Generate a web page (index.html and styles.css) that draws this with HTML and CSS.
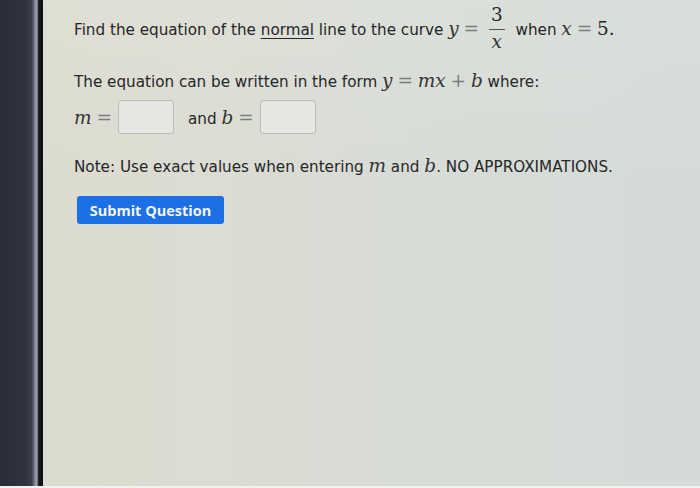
FILE: index.html
```html
<!DOCTYPE html>
<html>
<head>
<meta charset="utf-8">
<link rel="stylesheet" href="styles.css">
</head>
<body>
<div class="frame">
  <div class="bezel"></div>
  <main class="screen">
    <p class="q1">Find the equation of the <span class="ul">normal</span> line to the curve <span class="m">y</span> <span class="op">=</span> <span class="frac"><span class="num">3</span><span class="den m">x</span></span> when <span class="m">x</span> <span class="op">=</span> <span class="mn">5.</span></p>
    <p class="q2">The equation can be written in the form <span class="m">y</span> <span class="op">=</span> <span class="m">mx</span> <span class="op">+</span> <span class="m">b</span> where:</p>
    <div class="answers">
      <span class="m">m</span> <span class="op">=</span>
      <span class="box box-m"></span>
      <span class="lbl">and <span class="m">b</span> <span class="op">=</span></span>
      <span class="box box-b"></span>
    </div>
    <p class="note">Note: Use exact values when entering <span class="m">m</span> and <span class="m">b</span>. NO APPROXIMATIONS.</p>
    <button class="submit">Submit Question</button>
  </main>
</div>
</body>
</html>
```
FILE: styles.css
```css
html, body {
  margin: 0;
  padding: 0;
  width: 700px;
  height: 488px;
  overflow: hidden;
  background: #f2f2ef;
}
.frame {
  display: flex;
  height: 486px;
}
.bezel {
  width: 43px;
  flex: none;
  background: linear-gradient(90deg, #2a2c38 0%, #30333f 60%, #3a3e4c 74%, #8a90a2 82%, #9aa0b0 86%, #15161b 90%, #0e0f12 100%);
}
.screen {
  flex: 1;
  padding: 0 0 0 31px;
  background:
    linear-gradient(180deg, rgba(255,255,255,0.10) 0%, rgba(255,255,255,0) 40%),
    linear-gradient(90deg, #dcdbcf 0%, #dcdcd2 20%, #d8dcd6 55%, #d4dbd8 100%);
  font-family: "DejaVu Sans", "Open Sans", sans-serif;
  font-size: 15.2px;
  color: #262628;
}
p { margin: 0; }
.m {
  font-family: "DejaVu Serif", "Liberation Serif", serif;
  font-style: italic;
  font-size: 18.5px;
  color: #333;
}
.mn, .op {
  font-family: "DejaVu Serif", "Liberation Serif", serif;
  font-size: 18.5px;
}
.op { color: #7a7d7e; }
.ul {
  text-decoration: underline;
  text-underline-offset: 3px;
}
.q1 {
  height: 52px;
  line-height: 52px;
  padding-top: 3px;
}
.frac {
  display: inline-block;
  vertical-align: middle;
  text-align: center;
  line-height: 20px;
  margin: 0 6px 0 5px;
  position: relative;
  top: -2px;
}
.num {
  display: block;
  font-family: "DejaVu Serif", "Liberation Serif", serif;
  font-size: 18.5px;
  padding: 0 2px 4px;
  border-bottom: 1px solid #555;
}
.den { display: block; padding-top: 2px; }
.q2 {
  margin-top: 14px;
  line-height: 24px;
}
.answers {
  display: flex;
  align-items: center;
  margin-top: 5px;
  height: 36px;
  white-space: pre;
}
.answers .m { margin-right: 5px; }
.box {
  display: inline-block;
  width: 54px;
  height: 32px;
  border: 1px solid #b9bcb6;
  border-radius: 3px;
  background: #e4e7e2;
  margin-left: 6px;
}
.lbl { margin-left: 14px; }
.lbl .m { margin-right: 0; }
.note {
  margin-top: 19px;
  line-height: 24px;
}
.submit {
  margin: 17px 0 0 3px;
  display: block;
  background: #1c6fe4;
  color: #f4f7ff;
  border: none;
  border-radius: 3px;
  font-family: "Open Sans", "DejaVu Sans", sans-serif;
  font-weight: 700;
  font-size: 14.5px;
  width: 147px;
  height: 28px;
  padding: 0;
}
```
